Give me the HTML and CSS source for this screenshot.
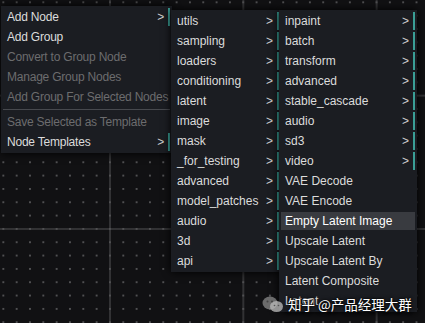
FILE: index.html
```html
<!DOCTYPE html>
<html lang="en">
<head>
    <meta charset="UTF-8">
    <title>Context Menu</title>
    <link rel="stylesheet" href="styles.css">
</head>
<body>
<div class="canvas">
    <div class="menu menu-main">
        <div class="entry sub"><span>Add Node</span><span class="arrow">&gt;</span></div>
        <div class="entry"><span>Add Group</span></div>
        <div class="entry disabled"><span>Convert to Group Node</span></div>
        <div class="entry disabled"><span>Manage Group Nodes</span></div>
        <div class="entry disabled"><span>Add Group For Selected Nodes</span></div>
        <div class="sep"></div>
        <div class="entry disabled"><span>Save Selected as Template</span></div>
        <div class="entry sub"><span>Node Templates</span><span class="arrow">&gt;</span></div>
    </div>

    <div class="menu menu-cat">
        <div class="entry sub"><span>utils</span><span class="arrow">&gt;</span></div>
        <div class="entry sub"><span>sampling</span><span class="arrow">&gt;</span></div>
        <div class="entry sub"><span>loaders</span><span class="arrow">&gt;</span></div>
        <div class="entry sub"><span>conditioning</span><span class="arrow">&gt;</span></div>
        <div class="entry sub"><span>latent</span><span class="arrow">&gt;</span></div>
        <div class="entry sub"><span>image</span><span class="arrow">&gt;</span></div>
        <div class="entry sub"><span>mask</span><span class="arrow">&gt;</span></div>
        <div class="entry sub"><span>_for_testing</span><span class="arrow">&gt;</span></div>
        <div class="entry sub"><span>advanced</span><span class="arrow">&gt;</span></div>
        <div class="entry sub"><span>model_patches</span><span class="arrow">&gt;</span></div>
        <div class="entry sub"><span>audio</span><span class="arrow">&gt;</span></div>
        <div class="entry sub"><span>3d</span><span class="arrow">&gt;</span></div>
        <div class="entry sub"><span>api</span><span class="arrow">&gt;</span></div>
    </div>

    <div class="menu menu-latent">
        <div class="entry sub"><span>inpaint</span><span class="arrow">&gt;</span></div>
        <div class="entry sub"><span>batch</span><span class="arrow">&gt;</span></div>
        <div class="entry sub"><span>transform</span><span class="arrow">&gt;</span></div>
        <div class="entry sub"><span>advanced</span><span class="arrow">&gt;</span></div>
        <div class="entry sub"><span>stable_cascade</span><span class="arrow">&gt;</span></div>
        <div class="entry sub"><span>audio</span><span class="arrow">&gt;</span></div>
        <div class="entry sub"><span>sd3</span><span class="arrow">&gt;</span></div>
        <div class="entry sub"><span>video</span><span class="arrow">&gt;</span></div>
        <div class="entry"><span>VAE Decode</span></div>
        <div class="entry"><span>VAE Encode</span></div>
        <div class="entry active"><span>Empty Latent Image</span></div>
        <div class="entry"><span>Upscale Latent</span></div>
        <div class="entry"><span>Upscale Latent By</span></div>
        <div class="entry"><span>Latent Composite</span></div>
        <div class="entry last"><span>Latent</span></div>
    </div>

    <!-- 水印 -->
    <div class="watermark">
        <svg class="wm-logo" width="22" height="18" viewBox="0 0 22 18">
            <ellipse cx="8" cy="8" rx="7.5" ry="6.5" fill="#8a8a8a" fill-opacity=".75"/>
            <ellipse cx="14.5" cy="11.5" rx="6.5" ry="5.5" fill="#b5b5b5" fill-opacity=".8"/>
            <circle cx="5.5" cy="6.5" r="1" fill="#444"/>
            <circle cx="10" cy="6.5" r="1" fill="#444"/>
            <circle cx="12.5" cy="10.5" r=".8" fill="#555"/>
            <circle cx="16.5" cy="10.5" r=".8" fill="#555"/>
        </svg>
        <span class="wm-text">知乎 @产品经理大群</span>
    </div>
</div>
</body>
</html>
```

FILE: styles.css
```css
*{
    margin: 0;
    padding: 0;
    box-sizing: border-box;
}
html,body{
    width: 100%;
    height: 100%;
}
body{
    overflow: hidden;
    background-color: #111113;
}
.canvas{
    width: 425px;
    height: 323px;
    position: relative;
    overflow: hidden;
    /* 点阵 + 分隔线 */
    background-image:
        radial-gradient(circle, #505052 0, #505052 0.8px, transparent 1.4px),
        linear-gradient(90deg, #323234 0, #323234 2px, transparent 2px),
        linear-gradient(#323234 0, #323234 2px, transparent 2px);
    background-size: 13.333px 13.333px, 133.333px 100%, 100% 133.333px;
    background-position: -3.33px -4.33px, 109px 0, 0 94.67px;
}

.menu{
    position: absolute;
    background-color: #1b1d22;
    box-shadow: 0 0 8px #000;
    font-family: "Liberation Sans", Arial, sans-serif;
    font-size: 12px;
    line-height: 14px;
    color: #dcdcdc;
}
.menu-main{
    left: 1px;
    top: 6px;
    width: 171px;
    letter-spacing: -0.22px;
}
.menu-cat{
    left: 171px;
    top: 10px;
    width: 110px;
}
.menu-latent{
    left: 279px;
    top: 10px;
    width: 138px;
    height: 302px;
}

.entry{
    display: flex;
    justify-content: space-between;
    margin: 2px;
    padding: 2px 4px;
    white-space: nowrap;
}
.entry.sub{
    border-right: 2px solid #3a9e95;
}
.entry .arrow{
    color: #cfcfcf;
}
.entry.disabled{
    color: #6c6c6e;
}
.entry.active{
    background-color: #393b40;
    color: #fff;
}
.sep{
    height: 1px;
    margin: 3px 2px;
    background-color: #47494e;
}

.watermark{
    position: absolute;
    left: 262px;
    top: 295px;
    display: flex;
    align-items: center;
    gap: 4px;
}
.wm-text{
    font-family: "Noto Sans CJK SC", sans-serif;
    font-size: 13.5px;
    line-height: 16px;
    color: #fff;
    text-shadow: 0 0 2px #000, 0 0 3px #000, 0 0 4px #1b1d22;
}
```
